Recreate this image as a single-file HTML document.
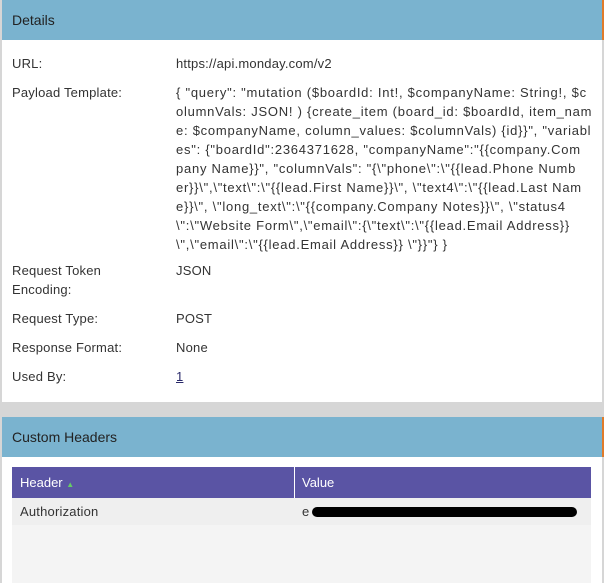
<!DOCTYPE html>
<html><head><meta charset="utf-8"><style>
*{margin:0;padding:0;box-sizing:border-box}
body{width:604px;height:583px;background:#d6d6d6;font-family:"Liberation Sans",sans-serif;font-size:13px;color:#333;position:relative;overflow:hidden}
.hdr{position:absolute;left:2px;width:602px;height:40px;background:#7ab3cf;border-right:2px solid #e07b2a;color:#222;font-size:14px;padding:12px 0 0 10px}
.body{position:absolute;left:2px;width:600px;background:#fff}
.t{position:absolute;white-space:nowrap;line-height:19px;letter-spacing:0.2px}
.l{left:12px}.v{left:176px}
a{color:#2a2a6a;text-decoration:underline}
</style></head><body>
<div class="hdr" style="top:0">Details</div>
<div class="body" style="top:40px;height:362px"></div>
<div class="t l" style="top:54px">URL:</div>
<div class="t v" style="top:54px">https://api.monday.com/v2</div>
<div class="t l" style="top:83px">Payload Template:</div>
<div class="t v" style="top:83px;letter-spacing:0.75px">{ "query": "mutation ($boardId: Int!, $companyName: String!, $c<br>olumnVals: JSON! ) {create_item (board_id: $boardId, item_nam<br>e: $companyName, column_values: $columnVals) {id}}", "variabl<br>es": {"boardId":2364371628, "companyName":"{{company.Com<br>pany Name}}", "columnVals": "{\"phone\":\"{{lead.Phone Numb<br>er}}\",\"text\":\"{{lead.First Name}}\", \"text4\":\"{{lead.Last Nam<br>e}}\", \"long_text\":\"{{company.Company Notes}}\", \"status4<br>\":\"Website Form\",\"email\":{\"text\":\"{{lead.Email Address}}<br>\",\"email\":\"{{lead.Email Address}} \"}}"} }</div>
<div class="t l" style="top:261px">Request Token<br>Encoding:</div>
<div class="t v" style="top:261px">JSON</div>
<div class="t l" style="top:309px">Request Type:</div>
<div class="t v" style="top:309px">POST</div>
<div class="t l" style="top:338px">Response Format:</div>
<div class="t v" style="top:338px">None</div>
<div class="t l" style="top:367px">Used By:</div>
<div class="t v" style="top:367px"><a>1</a></div>
<div class="hdr" style="top:417px">Custom Headers</div>
<div class="body" style="top:457px;height:126px"></div>
<div style="position:absolute;left:12px;top:467px;width:579px;height:116px;background:#f4f4f4"></div>
<div style="position:absolute;left:12px;top:467px;width:579px;height:31px;background:#5a54a4;color:#fff;font-size:13px">
<div style="position:absolute;left:8px;top:8px">Header <span style="color:#6c6;font-size:8px">▲</span></div>
<div style="position:absolute;left:282px;top:0;width:1px;height:31px;background:#fff"></div>
<div style="position:absolute;left:290px;top:8px">Value</div>
</div>
<div style="position:absolute;left:12px;top:498px;width:579px;height:27px;background:#efefef">
<div class="t" style="left:8px;top:4px">Authorization</div>
<div class="t" style="left:290px;top:4px">e</div>
<div style="position:absolute;left:300px;top:9px;width:265px;height:10px;background:#000;border-radius:5px"></div>
</div>
</body></html>
